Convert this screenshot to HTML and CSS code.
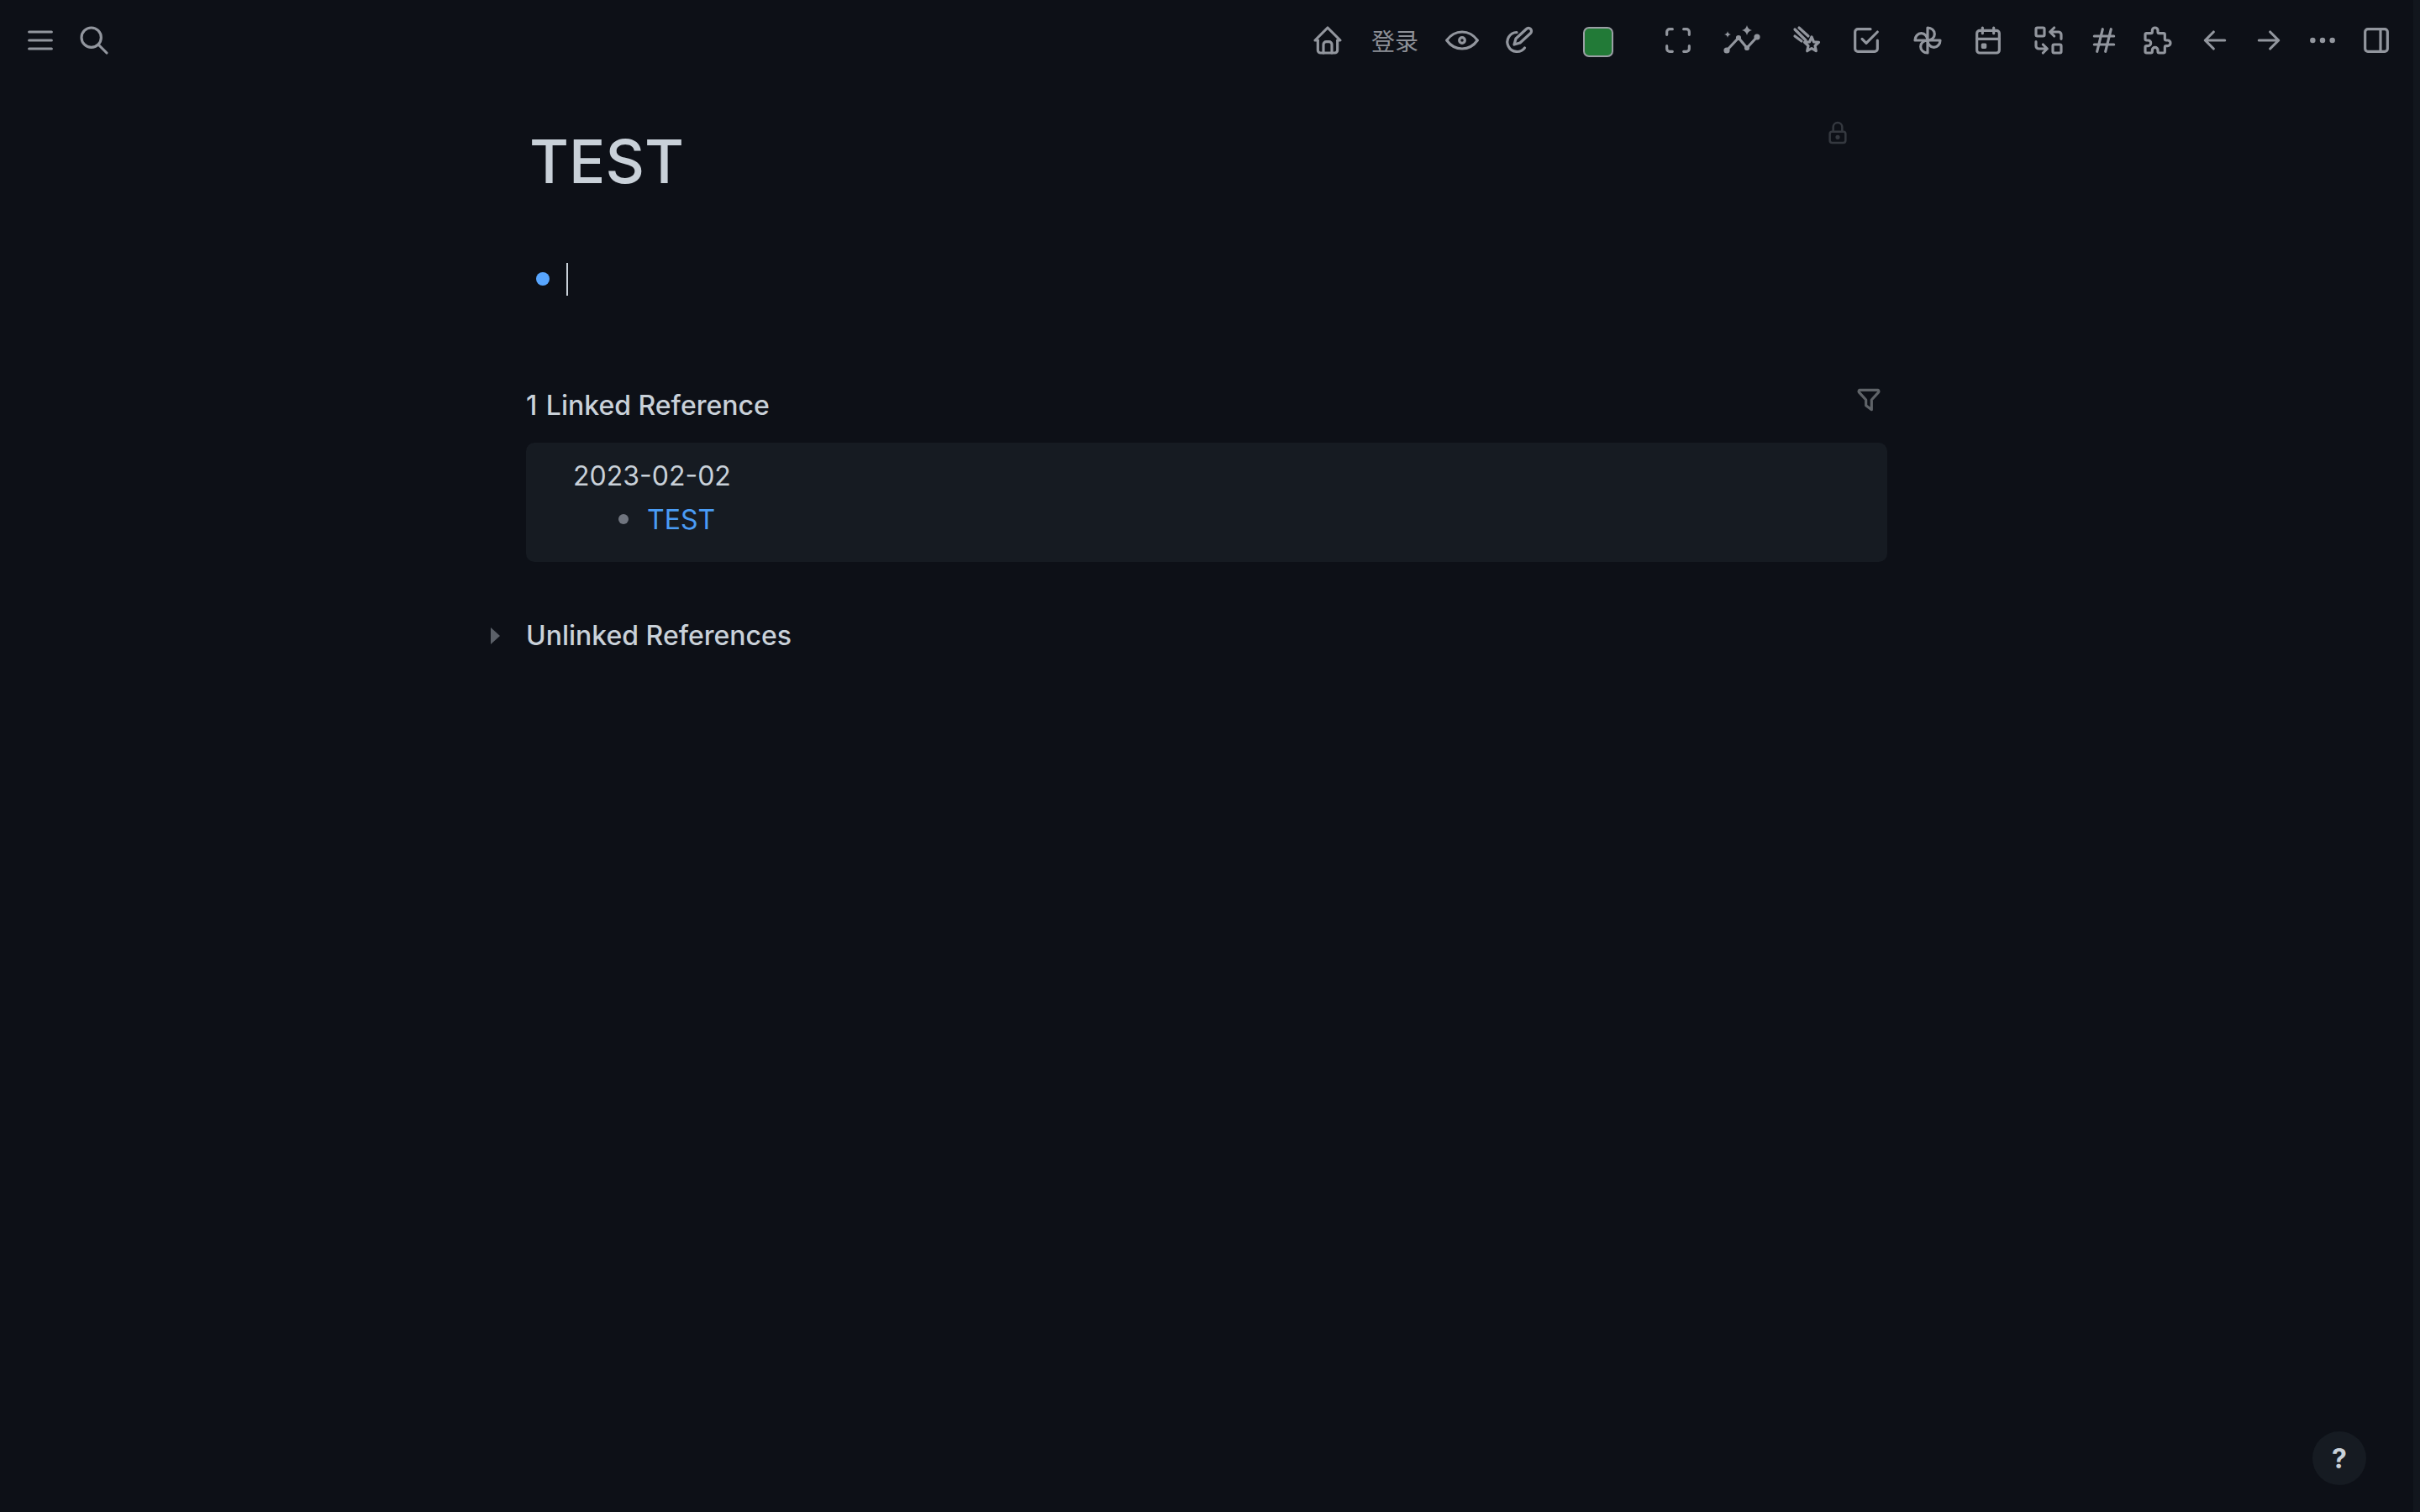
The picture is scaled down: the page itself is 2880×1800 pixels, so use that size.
FILE: index.html
```html
<!DOCTYPE html>
<html lang="en">
<head>
  <meta charset="UTF-8" />
  <meta name="viewport" content="width=device-width, initial-scale=1.0"/>
  <title>TEST</title>
  <link rel="stylesheet" href="styles.css">
</head>
<body>

<div class="app">
  <div class="main">
    <header class="topbar">
      <div class="left-tools">
        <button class="tool"><svg class="icon" viewBox="0 0 24 24"><path d="M4 6h16M4 12h16M4 18h16"/></svg></button>
        <button class="tool"><svg class="icon" viewBox="0 0 24 24"><circle cx="10" cy="10" r="7"/><path d="M21 21l-6-6"/></svg></button>
      </div>
      <div class="right-tools">
        <button class="tool"><svg class="icon" viewBox="0 0 24 24"><path d="M5 12l-2 0l9 -9l9 9l-2 0"/><path d="M5 12v7a2 2 0 0 0 2 2h10a2 2 0 0 0 2 -2v-7"/><path d="M9 21v-6a2 2 0 0 1 2 -2h2a2 2 0 0 1 2 2v6"/></svg></button>
        <button class="tool login">登录</button>
        <button class="tool"><svg class="icon" viewBox="0 0 24 24"><path d="M10 12a2 2 0 1 0 4 0a2 2 0 0 0 -4 0"/><path d="M23 12c-2.900 4 -6.500 6 -11 6c-4.500 0 -8.100 -2 -11 -6c2.900 -4 6.500 -6 11 -6c4.500 0 8.100 2 11 6"/></svg></button>
        <button class="tool"><svg class="icon icon-px" viewBox="0 0 40 40"><path d="M17 10.500A11.500 11.500 0 1 0 26.500 29"/><path d="M14 25L16 18L28.500 6.500a3.500 3.500 0 0 1 5 5L21 23Z"/></svg></button>
        <button class="tool"><span class="swatch"></span></button>
        <button class="tool"><svg class="icon" viewBox="0 0 24 24"><path d="M4 8v-2a2 2 0 0 1 2 -2h2"/><path d="M4 16v2a2 2 0 0 0 2 2h2"/><path d="M16 4h2a2 2 0 0 1 2 2v2"/><path d="M16 20h2a2 2 0 0 0 2 -2v-2"/></svg></button>
        <button class="tool"><svg class="icon icon-wide" viewBox="0 0 48 48"><path d="M6 36L20 21L30 33L42 20"/><circle class="solid" cx="6" cy="36" r="2"/><circle class="solid" cx="20" cy="21" r="1.500"/><circle class="solid" cx="30" cy="33" r="1.500"/><circle class="solid" cx="42" cy="20" r="2"/><path class="spark" d="M30 6Q31 11 36 12Q31 13 30 18Q29 13 24 12Q29 11 30 6Z"/><path class="spark" d="M7 13Q7.500 16.500 11 17Q7.500 17.500 7 21Q6.500 17.500 3 17Q6.500 16.500 7 13Z"/></svg></button>
        <button class="tool"><svg class="icon icon-px" viewBox="0 0 40 40"><path d="M12 5L23 15M7 7L20 20M7 15L15 21"/><path d="M27 16L29.500 21.800L35.500 22.400L31 26.500L32.300 32.700L27 29.500L21.700 32.700L23 26.500L18.500 22.400L24.500 21.800Z"/></svg></button>
        <button class="tool"><svg class="icon" viewBox="0 0 24 24"><path d="M9 11l3 3l8 -8"/><path d="M20 12v6a2 2 0 0 1 -2 2h-12a2 2 0 0 1 -2 -2v-12a2 2 0 0 1 2 -2h9"/></svg></button>
        <button class="tool"><svg class="icon" viewBox="0 0 24 24"><path d="M12 12c2.76 0 5 -2.01 5 -4.5s-2.24 -4.500 -5 -4.500v9z"/><path d="M12 12c0 2.76 2.010 5 4.500 5s4.500 -2.240 4.500 -5h-9z"/><path d="M12 12c-2.760 0 -5 2.010 -5 4.500s2.240 4.500 5 4.500v-9z"/><path d="M12 12c0 -2.760 -2.010 -5 -4.500 -5s-4.500 2.240 -4.500 5h9z"/></svg></button>
        <button class="tool"><svg class="icon" viewBox="0 0 24 24"><path d="M4 7a2 2 0 0 1 2 -2h12a2 2 0 0 1 2 2v12a2 2 0 0 1 -2 2h-12a2 2 0 0 1 -2 -2z"/><path d="M16 3v4M8 3v4M4 11h16"/><path d="M8 15h2v2h-2z"/></svg></button>
        <button class="tool"><svg class="icon" viewBox="0 0 24 24"><path d="M3 4a1 1 0 0 1 1 -1h4a1 1 0 0 1 1 1v4a1 1 0 0 1 -1 1h-4a1 1 0 0 1 -1 -1z"/><path d="M15 16a1 1 0 0 1 1 -1h4a1 1 0 0 1 1 1v4a1 1 0 0 1 -1 1h-4a1 1 0 0 1 -1 -1z"/><path d="M21 11v-3a2 2 0 0 0 -2 -2h-6l3 3m0 -6l-3 3"/><path d="M3 13v3a2 2 0 0 0 2 2h6l-3 -3m0 6l3 -3"/></svg></button>
        <button class="tool"><svg class="icon" viewBox="0 0 24 24"><path d="M5 9h14M5 15h14M11 4l-4 16M17 4l-4 16"/></svg></button>
        <button class="tool"><svg class="icon" viewBox="0 0 24 24"><path d="M4 7h3a1 1 0 0 0 1 -1v-1a2 2 0 0 1 4 0v1a1 1 0 0 0 1 1h3a1 1 0 0 1 1 1v3a1 1 0 0 0 1 1h1a2 2 0 0 1 0 4h-1a1 1 0 0 0 -1 1v3a1 1 0 0 1 -1 1h-3a1 1 0 0 1 -1 -1v-1a2 2 0 0 0 -4 0v1a1 1 0 0 1 -1 1h-3a1 1 0 0 1 -1 -1v-3a1 1 0 0 1 1 -1h1a2 2 0 0 0 0 -4h-1a1 1 0 0 1 -1 -1v-3a1 1 0 0 1 1 -1"/></svg></button>
        <button class="tool"><svg class="icon" viewBox="0 0 24 24"><path d="M5 12h14M5 12l6 6M5 12l6 -6"/></svg></button>
        <button class="tool"><svg class="icon" viewBox="0 0 24 24"><path d="M5 12h14M13 18l6 -6M13 6l6 6"/></svg></button>
        <button class="tool"><svg class="icon" viewBox="0 0 24 24"><circle class="solid" cx="5" cy="12" r="1"/><circle class="solid" cx="12" cy="12" r="1"/><circle class="solid" cx="19" cy="12" r="1"/></svg></button>
        <button class="tool"><svg class="icon" viewBox="0 0 24 24"><path d="M4 6a2 2 0 0 1 2 -2h12a2 2 0 0 1 2 2v12a2 2 0 0 1 -2 2h-12a2 2 0 0 1 -2 -2z"/><path d="M15 4v16"/></svg></button>
      </div>
    </header>

    <main class="page">
      <div class="title-row">
        <h1 class="title">TEST</h1>
        <svg class="icon lock" viewBox="0 0 24 24"><path d="M5 13a2 2 0 0 1 2 -2h10a2 2 0 0 1 2 2v6a2 2 0 0 1 -2 2h-10a2 2 0 0 1 -2 -2v-6z"/><path d="M11 16a1 1 0 1 0 2 0a1 1 0 0 0 -2 0"/><path d="M8 11v-4a4 4 0 1 1 8 0v4"/></svg>
      </div>

      <div class="block">
        <span class="bullet"></span>
        <span class="caret"></span>
      </div>

      <div class="ref-head">
        <span class="ref-title"><span class="ref-count">1</span> Linked Reference</span>
        <svg class="icon filter" viewBox="0 0 24 24"><path d="M5.500 5h13a1 1 0 0 1 .5 1.500l-5 5.500v7l-4 -3v-4l-5 -5.500a1 1 0 0 1 .5 -1.500"/></svg>
      </div>

      <div class="ref-card">
        <div class="ref-date">2023-02-02</div>
        <div class="ref-item">
          <span class="ref-dot"></span>
          <a class="ref-link">TEST</a>
        </div>
      </div>

      <div class="unlinked">
        <span class="arrow"></span>
        <span class="ref-title">Unlinked References</span>
      </div>
    </main>
  </div>
  <div class="track"></div>
</div>

<button class="help">?</button>

</body>
</html>
```

FILE: styles.css
```css
* { box-sizing: border-box; }

html, body { height: 100%; }

body {
  margin: 0;
  background: #0d1017;
  color: #c9d1d9;
  font-family: Inter, "Noto Sans CJK SC", sans-serif;
}

.app { display: flex; height: 100vh; }
.main { flex: 1; min-width: 0; }
.track { width: 8px; background: #12161d; }

.topbar {
  display: flex;
  justify-content: space-between;
  align-items: center;
  height: 96px;
  padding: 0 12px 0 16px;
}

.left-tools { display: grid; grid-template-columns: 64px 63px; }
.right-tools {
  display: grid;
  grid-template-columns: 64px 96px 64px 72px 116px 74px 78px 74px 70px 76px 68px 76px 56px 72px 64px 64px 64px 64px;
}

.tool {
  display: flex;
  align-items: center;
  justify-content: center;
  height: 48px;
  padding: 0;
  border: none;
  background: none;
  color: #92969e;
  font-family: inherit;
}

.icon {
  flex: none;
  width: 40px;
  height: 40px;
  fill: none;
  stroke: currentColor;
  stroke-width: 1.9;
  stroke-linecap: round;
  stroke-linejoin: round;
}
.icon-px { stroke-width: 3.2; }
.icon-wide { width: 48px; height: 48px; stroke-width: 3.2; }
.icon .solid { fill: currentColor; stroke: currentColor; }
.icon .spark { fill: currentColor; stroke: none; }

.login { font-size: 28px; color: #8d9097; }

.swatch {
  width: 36px;
  height: 36px;
  margin-top: 4px;
  background: #227a37;
  border: 2px solid #9b9fa5;
  border-radius: 7px;
}

.page {
  width: 1620px;
  margin-left: 626px;
}

.title-row {
  display: flex;
  justify-content: space-between;
  align-items: flex-start;
  margin-top: 56px;
  padding: 0 43px 0 4px;
}
.title {
  margin: 0;
  font-size: 72px;
  line-height: 80px;
  font-weight: 500;
  color: #c9d1d9;
}
.lock {
  width: 32px;
  height: 32px;
  margin-top: -10px;
  color: #34383f;
}

.block {
  display: flex;
  align-items: center;
  height: 40px;
  margin-top: 80px;
  padding-left: 12px;
}
.bullet {
  width: 16px;
  height: 16px;
  border-radius: 50%;
  background: #58a6ff;
}
.caret {
  width: 2px;
  height: 39px;
  margin-left: 20px;
  background: #c9d1d9;
}

.ref-head {
  display: flex;
  justify-content: space-between;
  align-items: center;
  height: 40px;
  margin-top: 111px;
}
.ref-title {
  font-size: 32px;
  line-height: 40px;
  font-weight: 500;
}
.ref-count { margin-right: 2px; }
.filter {
  margin: -14px 2px 0 0;
  color: #5f6368;
}

.ref-card {
  height: 142px;
  margin-top: 24px;
  padding: 15px 56px 0;
  background: #161b22;
  border-radius: 10px;
}
.ref-date {
  font-size: 32px;
  line-height: 50px;
}
.ref-item {
  display: flex;
  align-items: center;
  height: 52px;
  padding-left: 54px;
}
.ref-dot {
  width: 12px;
  height: 12px;
  border-radius: 50%;
  background: #70757f;
}
.ref-link {
  margin-left: 22px;
  font-size: 32px;
  color: #4a9cf5;
}

.unlinked {
  display: flex;
  align-items: center;
  gap: 31px;
  height: 40px;
  margin: 68px 0 0 -42px;
}
.arrow {
  width: 0;
  height: 0;
  border-style: solid;
  border-width: 10px 0 10px 11px;
  border-color: transparent transparent transparent #5b6068;
}

.help {
  position: absolute;
  right: 64px;
  bottom: 32px;
  width: 64px;
  height: 64px;
  padding: 0;
  border: none;
  border-radius: 50%;
  background: #161b22;
  color: #c9d1d9;
  font-family: inherit;
  font-size: 32px;
  font-weight: 700;
}
```
